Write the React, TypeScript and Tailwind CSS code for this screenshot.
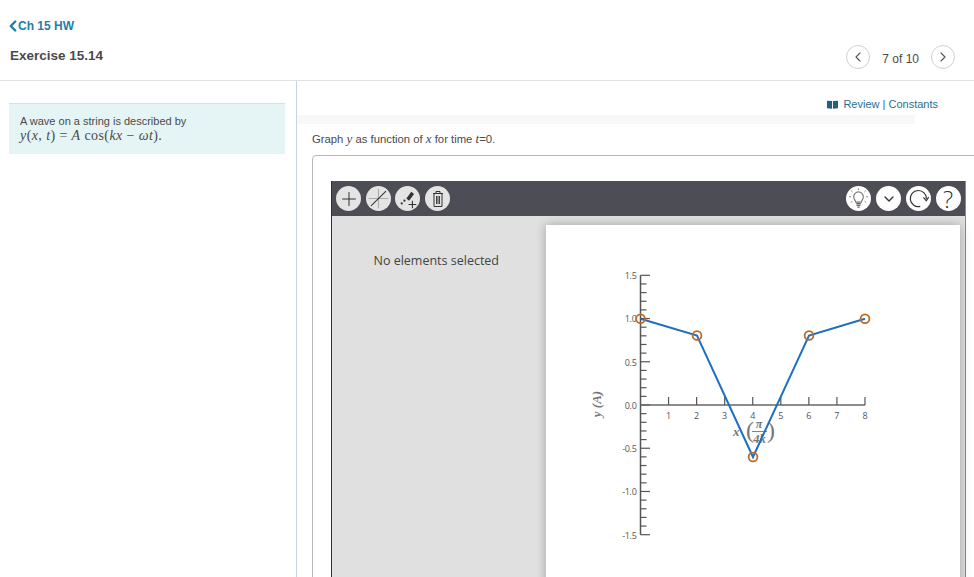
import { ChevronDown, ChevronLeft, ChevronRight, Plus } from 'lucide-react';
import type { ReactNode } from 'react';

const yTicks = Array.from({ length: 31 }, (_, i) => i);
const xVals = [1, 2, 3, 4, 5, 6, 7, 8];
const yLabels = [
  { label: '1.5', y: 275.5 },
  { label: '1.0', y: 319 },
  { label: '0.5', y: 362.5 },
  { label: '0.0', y: 405.5 },
  { label: '-0.5', y: 448.5 },
  { label: '-1.0', y: 492 },
  { label: '-1.5', y: 535.5 },
];
const points = [
  [640.5, 318.7],
  [697, 335.5],
  [753, 457],
  [809, 335.5],
  [865, 318.7],
];

function ToolButton({ children }: { children: ReactNode }) {
  return <button className="grid h-[25px] w-[25px] place-items-center rounded-full bg-[#e4e4e4] text-[#333]">{children}</button>;
}

function WhiteButton({ children }: { children: ReactNode }) {
  return <button className="grid h-[25px] w-[25px] place-items-center rounded-full bg-white text-[#444]">{children}</button>;
}

function Chart() {
  return (
    <svg viewBox="546 225 414 352" className="h-[352px] w-[414px]" style={{ fontFamily: '"Open Sans", sans-serif' }}>
      {/* y axis */}
      <line x1="640.5" y1="275.3" x2="640.5" y2="534.7" stroke="#555" strokeWidth="1.5" />
      {yTicks.map((i) => {
        const y = 275.3 + i * 8.647;
        const major = i % 5 === 0;
        return <line key={i} x1="640.5" x2={major ? 650 : 646.5} y1={y} y2={y} stroke="#555" strokeWidth="1.2" />;
      })}
      {/* x axis */}
      <line x1="640.5" y1="405" x2="865" y2="405" stroke="#666" strokeWidth="1.5" />
      {xVals.map((v) => {
        const x = 640.5 + v * 28.06;
        return (
          <g key={v}>
            <line x1={x} x2={x} y1="397" y2="405" stroke="#555" strokeWidth="1.2" />
            <text x={x} y="419" textAnchor="middle" fontSize="9" fill="#555">{v}</text>
          </g>
        );
      })}
      {yLabels.map((t) => (
        <text key={t.label} x="636.5" y={t.y + 3.2} textAnchor="end" fontSize="9" letterSpacing="-0.3" fill="#555">{t.label}</text>
      ))}

      {/* axis titles */}
      <text transform="translate(601 404) rotate(-90)" textAnchor="middle" fontSize="13" fontStyle="italic" fontWeight="bold" fill="#777" style={{ fontFamily: '"Liberation Serif", serif' }}>
        y (A)
      </text>
      <g fill="#777" style={{ fontFamily: '"Liberation Serif", serif' }}>
        <text x="733" y="436" fontSize="13" fontStyle="italic" fontWeight="bold">x</text>
        <text x="746" y="438" fontSize="24">(</text>
        <text x="767" y="438" fontSize="24">)</text>
        <text x="759" y="428" textAnchor="middle" fontSize="12" fontStyle="italic" fontWeight="bold">π</text>
        <line x1="752" x2="767" y1="431.5" y2="431.5" stroke="#777" strokeWidth="0.9" />
        <text x="759.5" y="443" textAnchor="middle" fontSize="12.5" fontStyle="italic" fontWeight="bold">4k</text>
      </g>

      {/* plotted function */}
      <polyline points={points.map((p) => p.join(',')).join(' ')} fill="none" stroke="#1f6fc0" strokeWidth="2" />
      {points.map((p) => (
        <circle key={p[0]} cx={p[0]} cy={p[1]} r="4.4" fill="none" stroke="#bd6a25" strokeWidth="1.8" />
      ))}
    </svg>
  );
}

export default function App() {
  return (
    <div className="flex h-[577px] w-[974px] flex-col overflow-hidden bg-white font-['Liberation_Sans',sans-serif] text-[#4a4a4a]">
      <header className="h-[81px] shrink-0 border-b border-[#e0e3e5] pl-[10px] pr-[19px] pt-[18px]">
        <a className="flex h-[15px] items-center text-xs font-bold text-[#1f7ea6]">
          <ChevronLeft className="-ml-[6px] -mr-[4px] h-[18px] w-[18px]" strokeWidth={3.2} />
          Ch 15 HW
        </a>
        <div className="mt-[7px] flex items-start justify-between">
          <h1 className="mt-[8px] text-[13.5px] font-bold leading-[16px]">Exercise 15.14</h1>
          <div className="mt-[5px] flex items-center text-xs">
            <button className="grid h-6 w-6 place-items-center rounded-full border border-[#d0d0d0] text-[#555]"><ChevronLeft className="h-4 w-4" strokeWidth={1.6} /></button>
            <span className="mx-3 translate-y-[1.5px]">7 of 10</span>
            <button className="grid h-6 w-6 place-items-center rounded-full border border-[#d0d0d0] text-[#555]"><ChevronRight className="h-4 w-4" strokeWidth={1.6} /></button>
          </div>
        </div>
      </header>

      <div className="flex min-h-0 flex-1">
        <aside className="w-[297px] shrink-0 border-r border-[#c4d6e2] pl-[9px] pr-[11px] pt-[22px]">
          <div className="h-[51px] border-t border-[#d4e2e4] bg-[#e5f5f5] pl-[11px] pt-[11px] text-[11px] leading-[13px]">
            <p>A wave on a string is described by</p>
            <p className="font-['Liberation_Serif',serif] text-[14px] leading-[15px] tracking-[0.4px]"><i>y</i>(<i>x</i>, <i>t</i>) = <i>A</i> cos(<i>kx</i> − <i>ωt</i>).</p>
          </div>
        </aside>

        <main className="min-w-0 flex-1">
          <div className="flex h-[34px] items-start justify-end pr-[36px] pt-[16px] text-[11px] leading-[14px] text-[#2a6f8e]">
            <span className="flex items-center gap-[5px]">
              <svg viewBox="0 0 12 9" className="h-[9px] w-[11px]" fill="#24607c">
                <path d="M0 0.5 L5.5 0.8 V9 L0 8.5 Z M6.5 0.8 L12 0.5 V8.5 L6.5 9 Z" />
              </svg>
              Review | Constants
            </span>
          </div>
          <div className="h-[9px] w-[618px] bg-[#f8f8f8]" />

          <div className="pl-[15px]">
            <p className="mt-[8px] h-[23px] text-[11.3px] leading-[14px]">
              Graph <i className="font-['Liberation_Serif',serif] text-[13px]">y</i> as function of <i className="font-['Liberation_Serif',serif] text-[13px]">x</i> for time <i className="font-['Liberation_Serif',serif] text-[13px]">t</i>=0.
            </p>
            <div className="h-[500px] w-[700px] rounded-tl-[4px] border border-[#b8b8b8] pl-[18px] pt-[25px]">
              <div className="flex h-[440px] w-[635px] flex-col border-x-[1.5px] border-l-[#333] border-r-[#8a8a8a] border-t-0">
                <div className="flex h-[35px] shrink-0 items-center justify-between bg-[#4d4d55] pl-[4px] pr-[4.5px]">
                  <div className="flex gap-[4.7px]">
                    <ToolButton><Plus className="h-[22px] w-[22px]" strokeWidth={1.1} /></ToolButton>
                    <ToolButton>
                      <svg viewBox="0 0 20 20" className="h-[23px] w-[23px]" fill="none" strokeWidth="0.9">
                        <path d="M10 1.5V18.5M1.5 10H18.5" stroke="#aaa" />
                        <path d="M3.5 16.5L16.5 3.5" stroke="#333" />
                      </svg>
                    </ToolButton>
                    <ToolButton>
                      <svg viewBox="0 0 20 20" className="h-[22px] w-[22px]" fill="#333">
                        <path d="M8.5 9.5L13 3.5l2.5 2-4.5 6z" />
                        <circle cx="6.8" cy="11.5" r="1" />
                        <circle cx="4.3" cy="14" r="1" />
                        <path d="M14 11.5v7M10.5 15h7" stroke="#333" strokeWidth="1" fill="none" />
                      </svg>
                    </ToolButton>
                    <ToolButton>
                      <svg viewBox="0 0 20 20" className="h-5 w-5" fill="none" stroke="#333" strokeWidth="1">
                        <path d="M5 4.5H15M8 4.5V2.5H12V4.5" />
                        <path d="M6 4.5V17.5H14V4.5" />
                        <path d="M8.8 7V15M11.2 7V15" strokeWidth="1.4" />
                      </svg>
                    </ToolButton>
                  </div>
                  <div className="flex gap-[4.7px]">
                    <WhiteButton>
                      <svg viewBox="0 0 20 20" className="h-[23px] w-[23px]" fill="none" stroke="#777" strokeWidth="1">
                        <path d="M7.6 13.2C7.4 11.6 5.8 10.8 5.8 8.5A4.2 4.2 0 0 1 14.2 8.5C14.2 10.8 12.6 11.6 12.4 13.2Z" />
                        <path d="M8 14.5H12M8.3 16H11.7M9 17.4H11" strokeWidth="1.1" stroke="#666" />
                        <path d="M10 1.2V2.6M3.6 3.2L4.8 4.3M16.4 3.2L15.2 4.3M1.8 8.5H3.4M16.6 8.5H18.2M3.4 13.4L4.7 12.4M16.6 13.4L15.3 12.4" strokeWidth="0.8" />
                      </svg>
                    </WhiteButton>
                    <WhiteButton><ChevronDown className="h-4 w-4 text-[#333]" strokeWidth={2} /></WhiteButton>
                    <WhiteButton>
                      <svg viewBox="0 0 20 20" className="h-[23px] w-[23px]" fill="none" stroke="#333" strokeWidth="1">
                        <path d="M11.5 16.8A7 7 0 1 1 16.8 10.5" />
                        <path d="M14.3 9L16.8 12L18.8 8.8" />
                      </svg>
                    </WhiteButton>
                    <WhiteButton><span className="font-['Open_Sans',sans-serif] text-[24px] font-light leading-none text-[#333]">?</span></WhiteButton>
                  </div>
                </div>
                <div className="flex min-h-0 flex-1 bg-[#e0e0e0]">
                  <div className="w-[213.5px] shrink-0 pt-[36px] text-center font-['Open_Sans',sans-serif] text-[12.5px] leading-[18px] text-[#444]">
                    <div className="pr-[5px]">No elements selected</div>
                  </div>
                  <div className="mt-[9px] h-[400px] w-[414px] shrink-0 bg-white shadow-[0_0_10px_rgba(0,0,0,0.28)]">
                    <Chart />
                  </div>
                </div>
              </div>
            </div>
          </div>
        </main>
      </div>
    </div>
  );
}
